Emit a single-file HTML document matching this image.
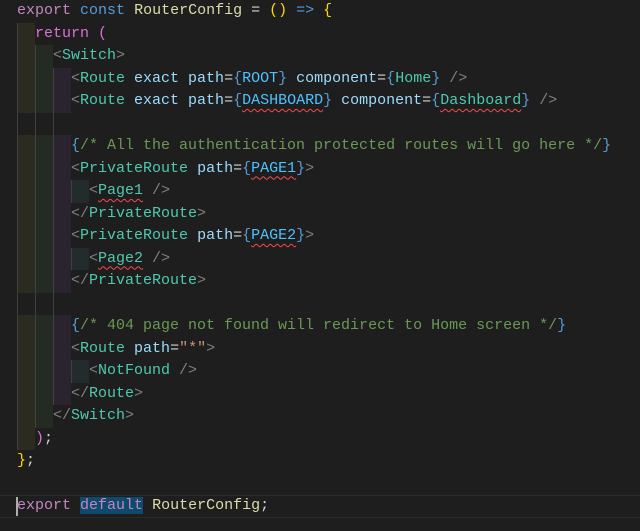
<!DOCTYPE html><html><head><style>
body{margin:0;background:#1e1e1e;width:640px;height:531px;overflow:hidden;font-family:"Liberation Mono","DejaVu Sans Mono",monospace;font-size:15px;color:#d4d4d4}
.l{position:absolute;left:0;width:640px;height:22.5px;line-height:22.5px;white-space:pre;padding-left:17px;box-sizing:border-box}
.i{display:inline-block;width:18px;height:22.5px;vertical-align:top;box-sizing:border-box;border-left:1px solid #404040}
.a{background:#2b2b1f}.b{background:#232b23}.c{background:#2b2430}.d{background:#222c2c}.e{background:transparent}
.k{color:#c586c0}.s{color:#569cd6}.f{color:#dcdcaa}.y{color:#ffd700}.p{color:#da70d6}.g{color:#808080}.t{color:#4ec9b0}.at{color:#9cdcfe}.cn{color:#4fc1ff}.cm{color:#6a9955}.st{color:#ce9178}
.w{text-decoration:underline wavy #f14c4c;text-underline-offset:4px;text-decoration-thickness:1px}
</style></head><body>
<div class="l" style="top:0"><span class="k">export</span> <span class="s">const</span> <span class="f">RouterConfig</span> = <span class="y">()</span> <span class="s">=&gt;</span> <span class="y">{</span></div>
<div class="l" style="top:22.5px"><span class="i a"></span><span class="p">return (</span></div>
<div class="l" style="top:45px"><span class="i a"></span><span class="i b"></span><span class="g">&lt;</span><span class="t">Switch</span><span class="g">&gt;</span></div>
<div class="l" style="top:67.5px"><span class="i a"></span><span class="i b"></span><span class="i c"></span><span class="g">&lt;</span><span class="t">Route</span> <span class="at">exact path</span>=<span class="s">{</span><span class="cn">ROOT</span><span class="s">}</span> <span class="at">component</span>=<span class="s">{</span><span class="t">Home</span><span class="s">}</span> <span class="g">/&gt;</span></div>
<div class="l" style="top:90px"><span class="i a"></span><span class="i b"></span><span class="i c"></span><span class="g">&lt;</span><span class="t">Route</span> <span class="at">exact path</span>=<span class="s">{</span><span class="cn w">DASHBOARD</span><span class="s">}</span> <span class="at">component</span>=<span class="s">{</span><span class="t w">Dashboard</span><span class="s">}</span> <span class="g">/&gt;</span></div>
<div class="l" style="top:112.5px"><span class="i e"></span><span class="i e"></span><span class="i e"></span></div>
<div class="l" style="top:135px"><span class="i a"></span><span class="i b"></span><span class="i c"></span><span class="s">{</span><span class="cm">/* All the authentication protected routes will go here */</span><span class="s">}</span></div>
<div class="l" style="top:157.5px"><span class="i a"></span><span class="i b"></span><span class="i c"></span><span class="g">&lt;</span><span class="t">PrivateRoute</span> <span class="at">path</span>=<span class="s">{</span><span class="cn w">PAGE1</span><span class="s">}</span><span class="g">&gt;</span></div>
<div class="l" style="top:180px"><span class="i a"></span><span class="i b"></span><span class="i c"></span><span class="i d"></span><span class="g">&lt;</span><span class="t w">Page1</span> <span class="g">/&gt;</span></div>
<div class="l" style="top:202.5px"><span class="i a"></span><span class="i b"></span><span class="i c"></span><span class="g">&lt;/</span><span class="t">PrivateRoute</span><span class="g">&gt;</span></div>
<div class="l" style="top:225px"><span class="i a"></span><span class="i b"></span><span class="i c"></span><span class="g">&lt;</span><span class="t">PrivateRoute</span> <span class="at">path</span>=<span class="s">{</span><span class="cn w">PAGE2</span><span class="s">}</span><span class="g">&gt;</span></div>
<div class="l" style="top:247.5px"><span class="i a"></span><span class="i b"></span><span class="i c"></span><span class="i d"></span><span class="g">&lt;</span><span class="t w">Page2</span> <span class="g">/&gt;</span></div>
<div class="l" style="top:270px"><span class="i a"></span><span class="i b"></span><span class="i c"></span><span class="g">&lt;/</span><span class="t">PrivateRoute</span><span class="g">&gt;</span></div>
<div class="l" style="top:292.5px"><span class="i e"></span><span class="i e"></span><span class="i e"></span></div>
<div class="l" style="top:315px"><span class="i a"></span><span class="i b"></span><span class="i c"></span><span class="s">{</span><span class="cm">/* 404 page not found will redirect to Home screen */</span><span class="s">}</span></div>
<div class="l" style="top:337.5px"><span class="i a"></span><span class="i b"></span><span class="i c"></span><span class="g">&lt;</span><span class="t">Route</span> <span class="at">path</span>=<span class="st">"*"</span><span class="g">&gt;</span></div>
<div class="l" style="top:360px"><span class="i a"></span><span class="i b"></span><span class="i c"></span><span class="i d"></span><span class="g">&lt;</span><span class="t">NotFound</span> <span class="g">/&gt;</span></div>
<div class="l" style="top:382.5px"><span class="i a"></span><span class="i b"></span><span class="i c"></span><span class="g">&lt;/</span><span class="t">Route</span><span class="g">&gt;</span></div>
<div class="l" style="top:405px"><span class="i a"></span><span class="i b"></span><span class="g">&lt;/</span><span class="t">Switch</span><span class="g">&gt;</span></div>
<div class="l" style="top:427.5px"><span class="i a"></span><span class="p">)</span>;</div>
<div class="l" style="top:450px"><span class="y">}</span>;</div>
<div class="l" style="top:495px;border-top:1px solid #2a2a2a;border-bottom:1px solid #2a2a2a;line-height:20.5px"><span style="position:absolute;left:16px;top:1px;width:2px;height:19px;background:#aeafad"></span><span class="k">export</span> <span class="k" style="background:#0e4a6c">default</span> <span class="f">RouterConfig</span>;</div>
</body></html>
